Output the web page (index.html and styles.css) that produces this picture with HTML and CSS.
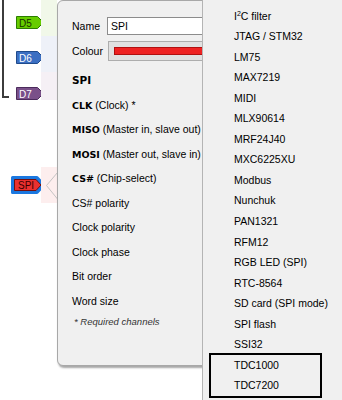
FILE: index.html
```html
<!DOCTYPE html>
<html lang="en">
<head>
  <meta charset="UTF-8">
  <title>Channel settings</title>
  <link rel="stylesheet" href="styles.css">
</head>
<body>
  <div class="scene">
    <div class="bus"></div>

    <div class="channels">
      <div class="chan d5">
        <div class="trace">
          <svg class="tag" width="28" height="13" viewBox="0 0 28 13">
            <polygon points="0.5,0.5 21.5,0.5 27.5,6.5 21.5,12.5 0.5,12.5" fill="#66cc00" stroke="#2b7d00"/>
            <text x="3" y="10.5" fill="#173300">D5</text>
          </svg>
        </div>
        <div class="tint"></div>
      </div>
      <div class="chan d6">
        <div class="trace">
          <svg class="tag" width="28" height="13" viewBox="0 0 28 13">
            <polygon points="0.5,0.5 21.5,0.5 27.5,6.5 21.5,12.5 0.5,12.5" fill="#3b6fc2" stroke="#1f4b8c"/>
            <text x="3" y="10.5" fill="#ffffff">D6</text>
          </svg>
        </div>
        <div class="tint"></div>
      </div>
      <div class="chan d7">
        <div class="trace">
          <svg class="tag" width="28" height="13" viewBox="0 0 28 13">
            <polygon points="0.5,0.5 21.5,0.5 27.5,6.5 21.5,12.5 0.5,12.5" fill="#7a5089" stroke="#4b2b5c"/>
            <text x="3" y="10.5" fill="#ffffff">D7</text>
          </svg>
        </div>
        <div class="tint"></div>
      </div>
      <div class="gap"></div>
      <div class="chan spi">
        <div class="trace">
          <svg class="tag-sel" width="35" height="18" viewBox="0 0 35 18">
            <polygon points="1.5,1.5 26,1.5 33,9 26,16.5 1.5,16.5" fill="#1b78e0" stroke="#1b78e0" stroke-width="3" stroke-linejoin="round"/>
            <polygon points="3.5,3.5 25,3.5 30,9 25,14.5 3.5,14.5" fill="#ea3030" stroke="#701010"/>
            <text x="7" y="13" fill="#3a0000">SPI</text>
          </svg>
        </div>
        <div class="tint"></div>
      </div>
    </div>

    <svg class="pointer" width="12" height="28" viewBox="0 0 12 28">
      <polyline points="11.5,0.5 0.5,13.5 11.5,27" fill="none" stroke="#c4c4c4"/>
    </svg>

    <div class="dialog">
      <div class="form-row name-row">
        <span class="label">Name</span>
        <div class="input">SPI</div>
      </div>
      <div class="form-row colour-row">
        <span class="label">Colour</span>
        <div class="colour-btn"><div class="swatch"></div></div>
      </div>
      <div class="field heading">SPI</div>
      <div class="field"><b>CLK</b> (Clock) *</div>
      <div class="field"><b>MISO</b> (Master in, slave out)</div>
      <div class="field"><b>MOSI</b> (Master out, slave in)</div>
      <div class="field"><b>CS#</b> (Chip-select)</div>
      <div class="field">CS# polarity</div>
      <div class="field">Clock polarity</div>
      <div class="field">Clock phase</div>
      <div class="field">Bit order</div>
      <div class="field">Word size</div>
      <div class="note">* Required channels</div>
    </div>

    <div class="menu">
      <div class="item">I<sup>2</sup>C filter</div>
      <div class="item">JTAG / STM32</div>
      <div class="item">LM75</div>
      <div class="item">MAX7219</div>
      <div class="item">MIDI</div>
      <div class="item">MLX90614</div>
      <div class="item">MRF24J40</div>
      <div class="item">MXC6225XU</div>
      <div class="item">Modbus</div>
      <div class="item">Nunchuk</div>
      <div class="item">PAN1321</div>
      <div class="item">RFM12</div>
      <div class="item">RGB LED (SPI)</div>
      <div class="item">RTC-8564</div>
      <div class="item">SD card (SPI mode)</div>
      <div class="item">SPI flash</div>
      <div class="item">SSI32</div>
      <div class="boxed">
        <div class="item">TDC1000</div>
        <div class="item">TDC7200</div>
      </div>
    </div>
  </div>
</body>
</html>
```

FILE: styles.css
```css
body {
  margin: 0;
  font-family: "Liberation Sans", Arial, sans-serif;
  font-size: 10px;
  color: #000;
  background-color: #fff;
}
.scene {
  position: relative;
  width: 342px;
  height: 400px;
  overflow: hidden;
}
.bus {
  position: absolute;
  left: 2px;
  top: -2px;
  width: 5px;
  height: 98px;
  border-left: 2px solid #3c3c3c;
  border-bottom: 2px solid #3c3c3c;
}
.channels {
  width: 57px;
}
.chan {
  display: flex;
  height: 36px;
}
.chan .trace {
  width: 41px;
  padding-top: 15px;
  box-sizing: border-box;
}
.chan .tint {
  width: 16px;
}
.chan .tag {
  display: block;
  margin-left: 16px;
}
.chan text {
  font-family: "Liberation Sans", Arial, sans-serif;
  font-size: 10px;
}
.d5 .trace {
  padding-top: 16px;
}
.d5 .tint {
  background-color: #f1f8e9;
}
.d6 .tint {
  background-color: #eef1f8;
}
.d7 {
  height: 28px;
}
.d7 .tint {
  background-color: #f5f0f5;
}
.gap {
  height: 67px;
}
.spi .trace {
  padding-top: 9px;
}
.spi .tint {
  background-color: #fdeeee;
}
.tag-sel {
  display: block;
  margin-left: 11px;
}
.pointer {
  position: absolute;
  left: 46px;
  top: 172px;
}
.dialog {
  position: absolute;
  left: 57px;
  top: 0;
  width: 180px;
  height: 366px;
  box-sizing: border-box;
  padding: 14px 0 0 14px;
  background-color: #f0f0f0;
  border: 1px solid #a8a8a8;
  border-radius: 6px;
  box-shadow: 1px 2px 2px rgba(0, 0, 0, 0.35);
}
.form-row {
  display: flex;
  align-items: center;
  height: 22px;
}
.colour-row {
  margin-top: 3px;
  margin-bottom: 6px;
}
.form-row .label {
  width: 35px;
  font-size: 10.5px;
}
.input {
  flex: 1;
  height: 18px;
  box-sizing: border-box;
  padding: 0 3px;
  line-height: 16px;
  font-size: 10.5px;
  background-color: #fff;
  border: 1px solid #8c8c8c;
}
.colour-btn {
  flex: 1;
  height: 20px;
  margin-left: 1px;
  box-sizing: border-box;
  padding: 5px 0 0 5px;
  background-color: #e1e1e1;
  border: 1px solid #adadad;
}
.swatch {
  height: 8px;
  box-sizing: border-box;
  background-color: #ee2222;
  border: 1px solid #b01010;
}
.field {
  height: 24.5px;
  line-height: 24.5px;
  font-size: 10.5px;
  white-space: nowrap;
}
.field b {
  font-family: "DejaVu Sans", Verdana, sans-serif;
  font-size: 9.5px;
}
.heading {
  font-family: "DejaVu Sans", Verdana, sans-serif;
  font-weight: bold;
  font-size: 10.5px;
}
.note {
  margin-left: 2px;
  line-height: 18px;
  font-size: 9.5px;
  font-style: italic;
  color: #333;
}
.menu {
  position: absolute;
  left: 202px;
  top: 0;
  right: 0;
  bottom: 0;
  padding-top: 5.5px;
  background-color: #f0f0f0;
  border-left: 1px solid #b4b4b4;
}
.item {
  height: 20.56px;
  line-height: 20.56px;
  padding-left: 31px;
  font-size: 10.5px;
  white-space: nowrap;
}
.item sup {
  font-size: 7px;
  line-height: 0;
  vertical-align: 4px;
}
.boxed {
  width: 109px;
  margin: -2px 0 0 6px;
  border: 2px solid #000;
}
.boxed .item {
  padding-left: 23px;
}
```
